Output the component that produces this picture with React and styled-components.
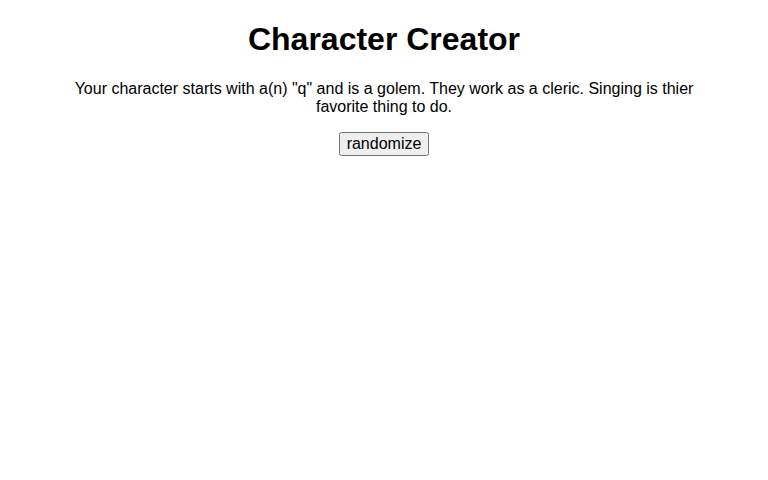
import React from 'react';
import styled, { createGlobalStyle } from 'styled-components';

const GlobalStyle = createGlobalStyle`
  body {
    margin: 0;
    background: #ffffff;
    font-family: "Liberation Sans", Arial, sans-serif;
    color: #000000;
  }
`;

const Page = styled.div`
  max-width: 640px;
  margin: 0 auto;
  text-align: center;
`;

const Title = styled.h1`
  font-size: 32px;
  font-weight: 700;
  margin: 21.44px 0;
`;

const Description = styled.p`
  font-size: 16px;
  margin: 16px 0;
`;

const RandomizeButton = styled.button`
  font-family: "Liberation Sans", Arial, sans-serif;
  font-size: 16px;
  padding: 1px 6px;
`;

const App = () => {
  return (
    <>
      <GlobalStyle />
      <Page>
        <Title>Character Creator</Title>
        <Description>
          Your character starts with a(n) "q" and is a golem. They work as a cleric. Singing is thier favorite thing to do.
        </Description>
        <div>
          <RandomizeButton>randomize</RandomizeButton>
        </div>
      </Page>
    </>
  );
};

export default App;
